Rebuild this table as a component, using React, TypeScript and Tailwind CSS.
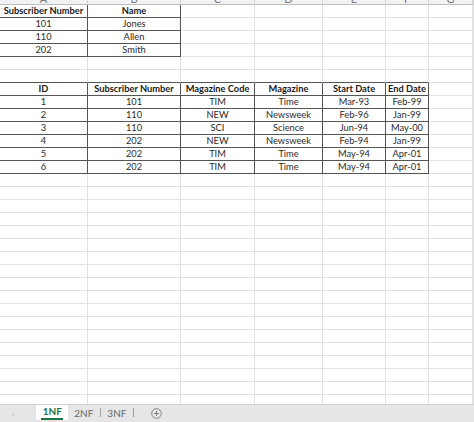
import React from "react";

const cols = ["A", "B", "C", "D", "E", "F", "G", "H"];
const ROWS = 31;

// cell contents keyed by row index (0-based, below header)
const data: Record<number, string[]> = {
  0: ["Subscriber Number", "Name"],
  1: ["101", "Jones"],
  2: ["110", "Allen"],
  3: ["202", "Smith"],
  6: ["ID", "Subscriber Number", "Magazine Code", "Magazine", "Start Date", "End Date"],
  7: ["1", "101", "TIM", "Time", "Mar-93", "Feb-99"],
  8: ["2", "110", "NEW", "Newsweek", "Feb-96", "Jan-99"],
  9: ["3", "110", "SCI", "Science", "Jun-94", "May-00"],
  10: ["4", "202", "NEW", "Newsweek", "Feb-94", "Jan-99"],
  11: ["5", "202", "TIM", "Time", "May-94", "Apr-01"],
  12: ["6", "202", "TIM", "Time", "May-94", "Apr-01"],
};

const boldRows = [0, 6];

function inTable(r: number, c: number) {
  if (r >= 0 && r <= 3 && c >= 0 && c <= 1) return true;
  if (r >= 6 && r <= 12 && c >= 0 && c <= 5) return true;
  return false;
}

export default function App() {
  return (
    <div
      className="flex h-[422px] w-[474px] flex-col overflow-hidden bg-white text-[#2a2a2a]"
      style={{ fontFamily: "Lato, 'Liberation Sans', sans-serif" }}
    >
      <div className="flex-1 overflow-hidden">
        <div className="grid grid-cols-[88px_93px_74px_68px_63px_43px_44px_1fr]">
          {cols.map((c) => (
            <div
              key={c}
              className="flex h-[5px] items-end justify-center overflow-hidden border-r border-b border-r-[#d6d6d6] border-b-[#bdbdbd] bg-[#f2f2f2]"
            >
              <span className="text-[11px] leading-none text-[#7a7a7a]">{c}</span>
            </div>
          ))}
          {Array.from({ length: ROWS }).map((_, r) =>
            cols.map((_, c) => {
              const text = data[r]?.[c];
              const darkR = inTable(r, c) || inTable(r, c + 1);
              const darkB = inTable(r, c) || inTable(r + 1, c);
              const bold = boldRows.includes(r) && text;
              return (
                <div
                  key={`${r}-${c}`}
                  className={[
                    "flex h-[13px] items-center justify-center overflow-hidden whitespace-nowrap border-r border-b text-[9.3px] leading-none",
                    darkR ? "border-r-[#555555]" : "border-r-[#e2e2e2]",
                    darkB ? "border-b-[#555555]" : "border-b-[#e2e2e2]",
                    bold ? "font-bold text-[#1a1a1a]" : "",
                  ].join(" ")}
                >
                  {text}
                </div>
              );
            })
          )}
        </div>
      </div>
      <div className="flex h-[18px] items-start border-t border-[#d0d0d0] bg-[#e6e6e6] text-[10px] text-[#666]">
        <span className="ml-[12px] mt-[3px] text-[8px] text-[#b5b5b5]">‹</span>
        <div className="ml-[22px] flex h-[15px] w-[32px] flex-col items-center justify-end bg-white">
          <span className="font-bold leading-none text-[#217346]">1NF</span>
          <span className="mt-[2px] h-[2px] w-[22px] bg-[#217346]" />
        </div>
        <span className="ml-[6px] mt-[2px] leading-[12px]">2NF</span>
        <span className="ml-[7px] mt-[3px] h-[9px] w-px bg-[#a0a0a0]" />
        <span className="ml-[6px] mt-[2px] leading-[12px]">3NF</span>
        <span className="ml-[7px] mt-[3px] h-[9px] w-px bg-[#a0a0a0]" />
        <svg className="ml-[17px] mt-[3px]" width="11" height="11" viewBox="0 0 11 11">
          <circle cx="5.5" cy="5.5" r="4.8" fill="none" stroke="#777" strokeWidth="0.9" />
          <path d="M5.5 3v5M3 5.5h5" stroke="#777" strokeWidth="0.9" />
        </svg>
      </div>
    </div>
  );
}
